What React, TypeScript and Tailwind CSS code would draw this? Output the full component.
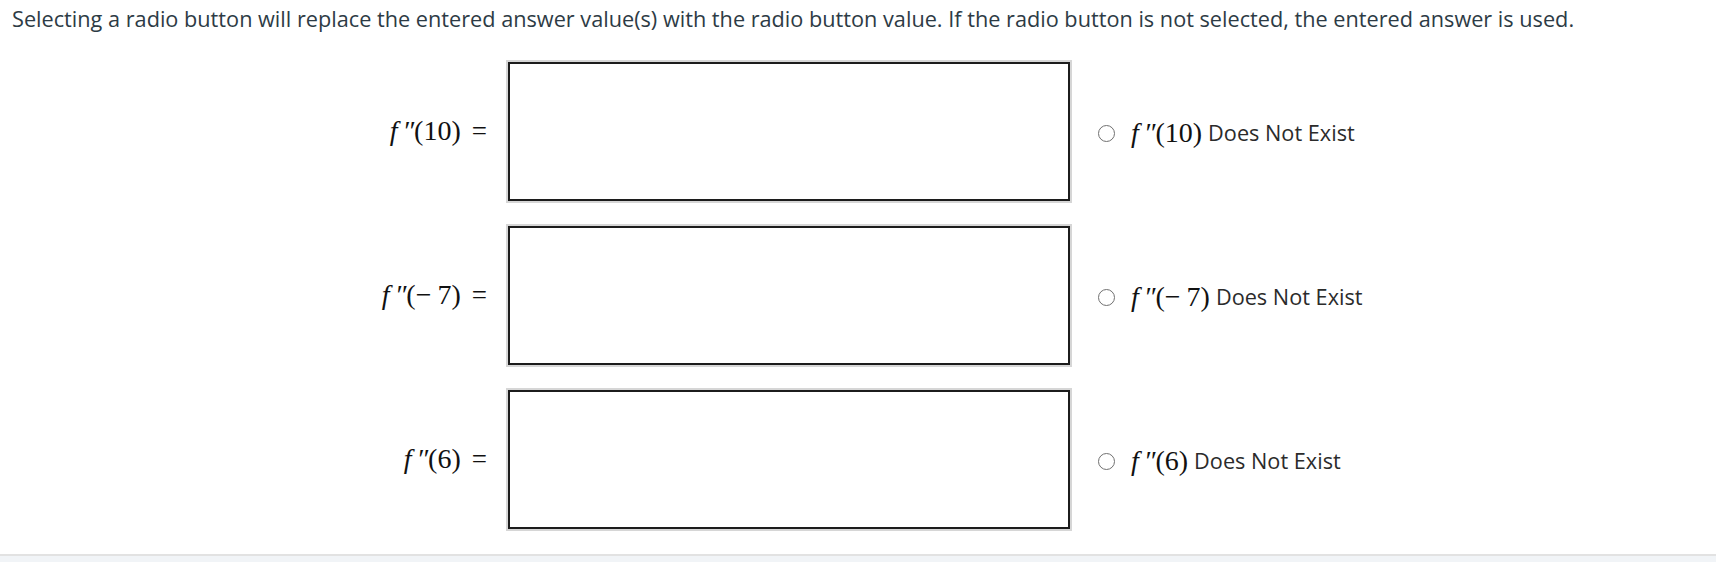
const rows = [
  { key: "10", sign: "", num: "10" },
  { key: "-7", sign: "\u2212", num: "7" },
  { key: "6", sign: "", num: "6" },
];

// f'' written the way the math renderer sets it: italic f, double prime, argument
function Fpp({ sign, num }: { sign: string; num: string }) {
  return (
    <span className="whitespace-nowrap font-['Liberation_Serif',serif] text-[28px] leading-none text-[#111]">
      <span className="italic">f</span>
      <span className="ml-[5px] italic">{"\u2033"}</span>
      <span>
        (
        {sign && <span className="mr-[6px]">{sign}</span>}
        {num})
      </span>
    </span>
  );
}

export default function App() {
  return (
    <div className="flex h-[562px] w-full flex-col bg-white font-['Open_Sans',sans-serif]">
      <p className="px-3 pt-[3px] text-[21.7px] leading-[32px] text-[#2d3b45]">
        Selecting a radio button will replace the entered answer value(s) with the radio button
        value. If the radio button is not selected, the entered answer is used.
      </p>

      <div className="mt-[27px] flex flex-col gap-[25px]">
        {rows.map((r) => (
          <div key={r.key} className="flex items-center">
            <label className="w-[508px] shrink-0 pr-[21px] text-right">
              <Fpp sign={r.sign} num={r.num} />
              <span className="ml-[11px] font-['Liberation_Serif',serif] text-[27px] leading-none text-[#111]">
                =
              </span>
            </label>
            <input
              type="text"
              className="h-[139px] w-[562px] shrink-0 border-2 border-[#1c1c1c] bg-white shadow-[0_0_0_2px_#d6d6d6] outline-none"
            />
            <label className="ml-[28px] flex items-center whitespace-nowrap pt-[3px]">
              <input
                type="radio"
                name={`dne-${r.key}`}
                className="h-[17px] w-[17px] shrink-0 appearance-none rounded-full border border-[#707070] bg-white"
              />
              <span className="ml-[16px]">
                <Fpp sign={r.sign} num={r.num} />
              </span>
              <span className="ml-[6px] text-[21.7px] leading-none text-[#2b2b2b]">Does Not Exist</span>
            </label>
          </div>
        ))}
      </div>

      <div className="flex-1" />
      <div className="h-[8px] border-t-2 border-[#e2e2e2] bg-[#f1f4f7]" />
    </div>
  );
}
